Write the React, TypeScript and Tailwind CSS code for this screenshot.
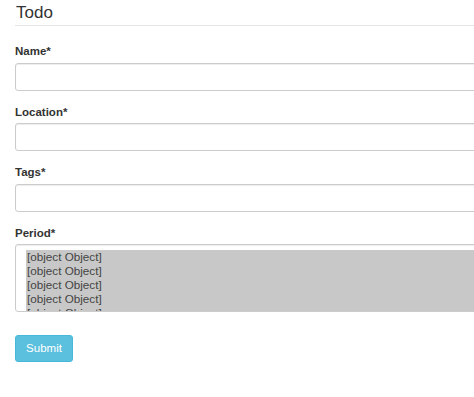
import React from "react";

const font = { fontFamily: '"Liberation Sans", Arial, Helvetica, sans-serif' };

function Field({ label }: { label: string }) {
  return (
    <div className="mb-[13px]">
      <label className="block h-[16px] text-[11.5px] leading-[16px] font-bold text-[#333] mb-[3.5px]">{label}</label>
      <input
        type="text"
        className="block w-full h-[28px] border border-[#ccc] rounded-[3px] bg-white px-[10px] text-[11.5px] text-[#555] shadow-[inset_0_1px_1px_rgba(0,0,0,0.075)] outline-none"
      />
    </div>
  );
}

export default function App() {
  const options = Array.from({ length: 6 }, () => "[object Object]");
  return (
    <div className="w-[474px] h-[397px] overflow-hidden bg-white" style={font}>
      <form className="w-[540px] pl-[15px]">
        <div className="w-full mt-[3px] pb-[2px] border-b border-[#e5e5e5] text-[17px] leading-[20px] text-[#333] pl-px">
          Todo
        </div>
        <div className="mt-[17px]">
          <Field label="Name*" />
          <Field label="Location*" />
          <Field label="Tags*" />
          <div>
            <label className="block h-[16px] text-[11.5px] leading-[16px] font-bold text-[#333] mb-[3.5px]">Period*</label>
            <div className="h-[68px] w-full overflow-hidden border border-[#ccc] rounded-[3px] bg-white pt-[5px] pl-[10px] shadow-[inset_0_1px_1px_rgba(0,0,0,0.075)]">
              {options.map((o, i) => (
                <div key={i} className="h-[14px] leading-[14px] bg-[#c8c8c8] text-[11.7px] text-[#444] pl-[1px]">
                  {o}
                </div>
              ))}
            </div>
          </div>
        </div>
        <button
          type="button"
          className="mt-[23px] block w-[58px] h-[27px] rounded-[3px] border border-[#46b8da] bg-[#5bc0de] text-white text-[11.5px] leading-[25px] text-center"
        >
          Submit
        </button>
      </form>
    </div>
  );
}
